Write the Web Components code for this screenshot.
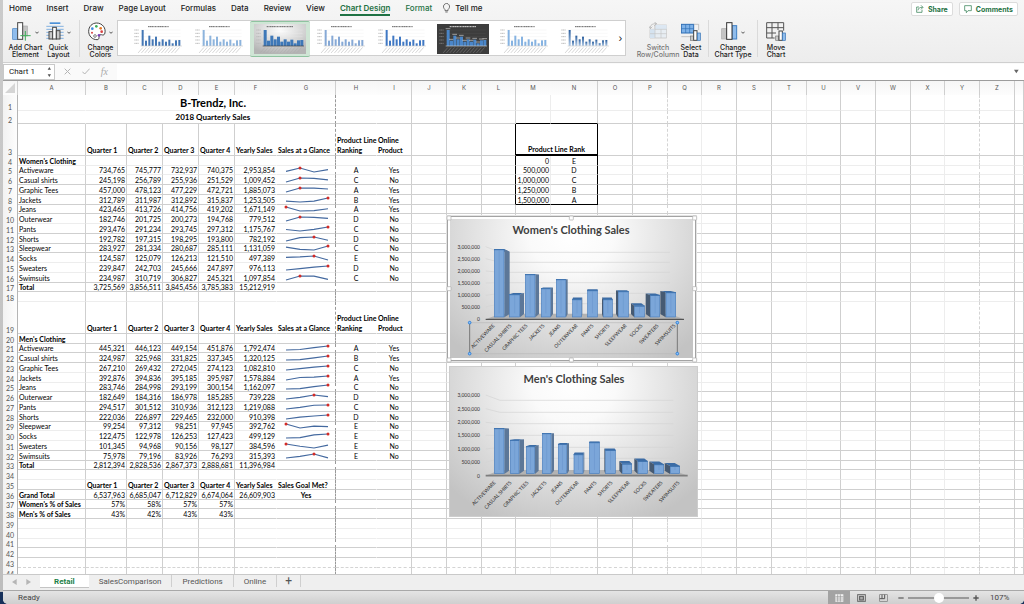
<!DOCTYPE html>
<html lang="en">
<head>
<meta charset="utf-8">
<title>B-Trendz - Retail</title>
<style>
    html, body {
        margin: 0;
        height: 100%;
        overflow: hidden;
    }
    body {
        font-family: Inter, "Liberation Sans", sans-serif;
        font-size: 8px;
        color: #222;
        background: linear-gradient(#cbcbcb 0, #bdbdbd 98%, #16305a 98%);
        --green: #1f7244;
        --line: #cfcfcf;
        --faint: #ededed;
    }
</style>
</head>
<body>
<app-window></app-window>

<script>
(function() {
    const define = (name, html, setup) => {
        const $template = document.createElement('template');
        $template.innerHTML = html;
        customElements.define(name, class extends HTMLElement {
            constructor() {
                super();
                this.attachShadow({ mode: 'open' });
            }
            connectedCallback() {
                if (this.shadowRoot.childNodes.length) {
                    return;
                }
                this.shadowRoot.appendChild($template.content.cloneNode(true));
                if (setup) {
                    setup(this, this.shadowRoot);
                }
            }
        });
    };

    const resetButton = `
        button {
            font: inherit;
            color: inherit;
            margin: 0;
            padding: 0;
            border: 0;
            background: none;
            cursor: pointer;
        }
    `;

    /* ---------- icons, drawn on a 3x grid ---------- */
    const icons = {
        addChart: [20, 19, `
            <rect x="2" y="20" width="15" height="32" fill="#8fbcec" stroke="#3f7fc4" stroke-width="2"/>
            <rect x="32" y="12" width="14" height="30" fill="#c4c4c4" stroke="#aaa" stroke-width="2"/>
            <rect x="17" y="2" width="15" height="50" fill="#fff" stroke="#444" stroke-width="3"/>
            <path d="M25 41H56M40 27V56" stroke="#3fae5a" stroke-width="3" fill="none"/>`],
        quickLayout: [18, 19, `
            <rect x="11" y="1" width="32" height="5" fill="#4b91d8"/>
            <path d="M1 13H53M1 22H53M1 31H53M1 40H53M1 49H53" stroke="#4b91d8" stroke-width="2"/>
            <rect x="9" y="29" width="11" height="22" fill="#c9c9c9" stroke="#444" stroke-width="3"/>
            <rect x="20" y="16" width="11" height="35" fill="#fff" stroke="#444" stroke-width="3"/>
            <rect x="31" y="26" width="11" height="25" fill="#c9c9c9" stroke="#444" stroke-width="3"/>`],
        palette: [18, 19, `
            <path d="M26 3C12 3 2 14 2 28s11 25 25 25c9 0 4-9 8-14 4-4 10 4 15-3C56 18 42 3 26 3Z" fill="#fff" stroke="#444" stroke-width="3"/>
            <circle cx="13" cy="20" r="4" fill="#3c8be0"/><circle cx="25" cy="13" r="4" fill="#3fae5a"/>
            <circle cx="38" cy="19" r="4" fill="#e87722"/><circle cx="12" cy="32" r="3" fill="#d84141"/>
            <circle cx="21" cy="42" r="4" fill="none" stroke="#444" stroke-width="2"/>
            <circle cx="33" cy="40" r="4" fill="#7b3fb5"/><circle cx="41" cy="29" r="4" fill="#d84141"/>`],
        switchRow: [18, 19, `
            <path d="M18 9H53V48H3V22H18Z" fill="#e2ecf5" stroke="#b9b9b9" stroke-width="3"/>
            <rect x="18" y="9" width="35" height="13" fill="#cfe1f3"/><rect x="3" y="22" width="15" height="26" fill="#c3daf0"/>
            <path d="M3 35H53M18 22H53M18 9V48M36 22V48" stroke="#a9a9a9" stroke-width="2" fill="none"/>
            <path d="M4 19C3 9 10 5 22 5M16 0l7 5-7 6M0 13l4 7 6-6" stroke="#777" stroke-width="2" fill="none"/>`],
        selectData: [20, 19, `
            <rect x="1" y="7" width="37" height="26" fill="#7fb2e8" stroke="#2f6fb5" stroke-width="3"/>
            <path d="M1 20H38M14 7V33M26 7V33" stroke="#2f6fb5" stroke-width="2"/>
            <path d="M1 44H34M38 7H53V24" stroke="#aaa" stroke-width="2" fill="none"/>
            <rect x="28" y="42" width="9" height="13" fill="#c9c9c9" stroke="#777" stroke-width="2"/>
            <rect x="38" y="26" width="10" height="29" fill="#fff" stroke="#444" stroke-width="3"/>
            <rect x="49" y="33" width="9" height="22" fill="#8fbcec" stroke="#2f6fb5" stroke-width="2"/>`],
        chartType: [17, 19, `
            <rect x="2" y="20" width="15" height="31" fill="#c4c4c4" stroke="#aaa" stroke-width="2"/>
            <rect x="33" y="11" width="14" height="40" fill="#8fbcec" stroke="#3f7fc4" stroke-width="3"/>
            <rect x="17" y="2" width="16" height="50" fill="#fff" stroke="#333" stroke-width="3"/>`],
        moveChart: [20, 19, `
            <path d="M26 48H2V2H53V26M2 17H53M2 33H30M18 2V48M36 2V24" fill="none" stroke="#555" stroke-width="3"/>
            <rect x="29" y="42" width="9" height="13" fill="#c9c9c9" stroke="#777" stroke-width="2"/>
            <rect x="39" y="27" width="10" height="28" fill="#fff" stroke="#444" stroke-width="3"/>
            <rect x="49" y="33" width="9" height="22" fill="#8fbcec" stroke="#2f6fb5" stroke-width="2"/>`],
        chevron: [4, 3, `<path d="M1 2l5 5 5-5" fill="none" stroke="#333" stroke-width="2.5"/>`],
        bulb: [7, 10, `
            <path d="M6 20C1 15 0 10 3 5.500 7 0 15 0 18 5.500 21 10 20 15 15 20v3H6Z" fill="none" stroke="#333" stroke-width="2"/>
            <path d="M7 27h7" stroke="#333" stroke-width="2"/>`],
        share: [8, 8, `
            <path d="M9 6H2V22H18V14" fill="none" stroke="#1f7244" stroke-width="2"/>
            <path d="M6 16C7 9 11 7 20 7M15 1l6 6-6 6" fill="none" stroke="#1f7244" stroke-width="2"/>`],
        comment: [8, 8, `<path d="M2 2H22V17H12l-5 6v-6H2Z" fill="none" stroke="#1f7244" stroke-width="2"/>`],
        cancel: [7, 7, `<path d="M2 2L19 19M19 2L2 19" stroke="#b4b4b4" stroke-width="3"/>`],
        accept: [8, 7, `<path d="M1 11l7 7L23 2" fill="none" stroke="#b4b4b4" stroke-width="3"/>`],
        normalView: [9, 8, `
            <rect x="1" y="1" width="24" height="22" fill="#fff"/>
            <path d="M1 7H25M1 12H25M1 18H25M8 1V23M16 1V23" stroke="#8f8f8f" stroke-width="2"/>`],
        pageView: [9, 8, `
            <rect x="2" y="2" width="23" height="20" fill="none" stroke="#666" stroke-width="3"/>
            <rect x="8" y="7" width="11" height="11" fill="#aaa" stroke="#555" stroke-width="3"/>`],
        breakView: [9, 8, `
            <rect x="2" y="2" width="23" height="20" fill="none" stroke="#777" stroke-width="2"/>
            <path d="M2 14H17V2M9 2V14" fill="none" stroke="#555" stroke-width="3"/>`]
    };

    const icon = (name) => {
        const [w, h, body] = icons[name];
        return `<svg width="${w}" height="${h}" viewBox="0 0 ${w * 3} ${h * 3}" aria-hidden="true">${body}</svg>`;
    };

    /* ---------- menu ---------- */
    define('menu-tab', `
    <style>
        ${resetButton}
        :host { display: block; }
        button {
            height: 16px;
            line-height: 16px;
            font-weight: 500;
            white-space: nowrap;
            box-sizing: border-box;
        }
        :host([tone]) button { color: var(--green); }
        :host([current]) button {
            font-weight: 600;
            border-bottom: 2px solid var(--green);
        }
    </style>
    <button type="button"><slot></slot></button>
    `);

    define('menu-bar', `
    <style>
        ${resetButton}
        :host {
            display: flex;
            align-items: flex-start;
            justify-content: space-between;
            height: 18px;
            padding: 0 6px;
        }
        nav { display: flex; gap: 15px; }
        .tell, .actions, .actions button { display: flex; align-items: center; }
        .tell { gap: 5px; height: 16px; margin-left: -4px; font-weight: 500; }
        .actions { gap: 6px; padding-top: 2px; }
        .actions button {
            gap: 4px;
            height: 14px;
            padding: 0 4px;
            color: var(--green);
            font-size: 7px;
            font-weight: 700;
            background: #fff;
            border: 1px solid #dcdcdc;
            border-radius: 2px;
        }
    </style>
    <nav>
        <menu-tab>Home</menu-tab>
        <menu-tab>Insert</menu-tab>
        <menu-tab>Draw</menu-tab>
        <menu-tab>Page Layout</menu-tab>
        <menu-tab>Formulas</menu-tab>
        <menu-tab>Data</menu-tab>
        <menu-tab>Review</menu-tab>
        <menu-tab>View</menu-tab>
        <menu-tab tone current>Chart Design</menu-tab>
        <menu-tab tone>Format</menu-tab>
        <button class="tell" type="button">${icon('bulb')}Tell me</button>
    </nav>
    <div class="actions">
        <button type="button">${icon('share')}Share</button>
        <button type="button">${icon('comment')}Comments</button>
    </div>
    `);

    /* ---------- ribbon ---------- */
    define('ribbon-button', `
    <style>
        ${resetButton}
        :host { display: flex; justify-content: center; }
        :host([muted]) { opacity: .6; }
        button {
            display: flex;
            flex-direction: column;
            align-items: center;
            font-size: 7px;
            line-height: 7px;
            font-weight: 500;
            white-space: pre;
        }
        .icon {
            display: flex;
            align-items: center;
            gap: 3px;
            height: 24px;
        }
        .more { display: none; }
        :host([menu]) .more { display: flex; }
    </style>
    <button type="button">
        <span class="icon"><span id="icon"></span><span class="more">${icon('chevron')}</span></span>
        <slot></slot>
    </button>
    `, ($el, root) => {
        root.getElementById('icon').innerHTML = icon($el.getAttribute('icon'));
    });

    const thumbValues = [48, 16, 31, 20, 28, 13, 20, 13, 19, 8, 17, 18];

    define('chart-thumb', `
    <style>
        ${resetButton}
        :host { display: block; }
        button {
            display: block;
            padding: 2px 4px;
            border: 1px solid transparent;
            border-width: 1px 0;
            border-radius: 2px;
        }
        svg { display: block; }
        :host([selected]) button {
            background: #cfe5d5;
            border-color: #8fc3a0;
        }
    </style>
    <button type="button"></button>
    `, ($el, root) => {
        const look = $el.getAttribute('look');
        const dark = look === 'dark';
        const gray = look === 'gray';
        const fills = {
            plain: '#4377b5', light: '#8db4dd', gray: '#3e78b8', pale: '#86a9d6',
            wide: '#3f78c4', dark: '#4a86c9', sky: '#86b3e2', fade: 'url(#bar)'
        };
        let parts = '';
        for (let y = 18; y < 66; y += 10) {
            parts += `<path d="M26 ${y}H146" stroke="${dark ? '#555' : '#e9e9e9'}"/>`;
            parts += `<path d="M7 ${y}H20" stroke="${dark ? '#777' : '#bbb'}" stroke-width="3" stroke-dasharray="4 1"/>`;
        }
        thumbValues.forEach((v, i) => {
            const x = 29 + i * 10;
            const w = gray || dark ? 9 : 6;
            parts += `<rect x="${x}" y="${66 - v}" width="${w}" height="${v}" fill="${fills[look]}"/>`;
            parts += `<path d="M${x - 10} 86l14-16" stroke="${dark ? '#888' : '#aaa'}" stroke-width="2" stroke-dasharray="3 1"/>`;
            if (dark) {
                parts += `<path d="M${x - 3} ${62 - v}h14" stroke="#ccc" stroke-width="2"/>`;
            }
        });
        root.querySelector('button').setAttribute('aria-label', 'Chart style ' + look);
        root.querySelector('button').innerHTML = `
            <svg width="52" height="30" viewBox="0 0 156 90">
                <defs>
                    <linearGradient id="bar" x2="0" y2="1"><stop stop-color="#2c5f9e"/><stop offset="1" stop-color="#b5cde8"/></linearGradient>
                    <radialGradient id="bg" cx=".5" cy=".2" r=".8"><stop stop-color="#fff"/><stop offset="1" stop-color="#b4b4b4"/></radialGradient>
                </defs>
                <rect width="156" height="90" fill="${dark ? '#3d3d3d' : gray ? 'url(#bg)' : '#fff'}"/>
                <path d="M${gray || dark ? 38 : 48} 8h${gray || dark ? 80 : 62}" stroke="${dark ? '#ddd' : '#666'}" stroke-width="3" stroke-dasharray="5 1 3 1"/>
                ${parts}
                <path d="M26 66H150" stroke="${gray ? '#444' : '#ccc'}" stroke-width="2"/>
            </svg>`;
    });

    define('ribbon-bar', `
    <style>
        ${resetButton}
        :host {
            display: flex;
            align-items: flex-start;
            height: 42px;
            padding: 2px 0 0 6px;
            border-bottom: 1px solid #cfcfcf;
        }
        .group { display: flex; }
        .group > * { width: 33px; }
        hr {
            width: 1px;
            height: 37px;
            margin: 0 4px;
            border: 0;
            background: #dadada;
        }
        .gallery {
            display: flex;
            flex: 0 1 509px;
            box-sizing: border-box;
            height: 36px;
            padding-left: 10px;
            background: #fff;
            border: 1px solid #cfcfcf;
        }
        .gallery chart-thumb { flex: 0 0 60px; margin-right: 1px; }
        .gallery button { flex: 1; font-size: 10px; }
        .wide { margin-left: 12px; }
        .wide > * { width: 40px; }
        .wide > :last-child { width: 26px; }
        .type { width: 40px; }
        .move { width: 28px; }
    </style>
    <div class="group">
        <ribbon-button icon="addChart" menu>Add Chart
Element</ribbon-button>
        <ribbon-button icon="quickLayout" menu>Quick
Layout</ribbon-button>
    </div>
    <hr>
    <div class="group"><ribbon-button icon="palette" menu>Change
Colors</ribbon-button></div>
    <div class="gallery">
        <chart-thumb look="plain"></chart-thumb>
        <chart-thumb look="light"></chart-thumb>
        <chart-thumb look="gray" selected></chart-thumb>
        <chart-thumb look="pale"></chart-thumb>
        <chart-thumb look="wide"></chart-thumb>
        <chart-thumb look="dark"></chart-thumb>
        <chart-thumb look="sky"></chart-thumb>
        <chart-thumb look="fade"></chart-thumb>
        <button type="button" aria-label="More chart styles">›</button>
    </div>
    <div class="group wide">
        <ribbon-button icon="switchRow" muted>Switch
Row/Column</ribbon-button>
        <ribbon-button icon="selectData">Select
Data</ribbon-button>
    </div>
    <hr>
    <ribbon-button class="type" icon="chartType" menu>Change
Chart Type</ribbon-button>
    <hr>
    <ribbon-button class="move" icon="moveChart">Move
Chart</ribbon-button>
    `);

    /* ---------- formula bar ---------- */
    define('formula-bar', `
    <style>
        ${resetButton}
        :host {
            display: flex;
            align-items: center;
            height: 17px;
            background: #fafafa;
            border-bottom: 1px solid #9c9c9c;
            font-family: Roboto, sans-serif;
        }
        input {
            font: inherit;
            color: #222;
            border: 0;
            padding: 0;
            outline: 0;
            background: none;
            min-width: 0;
        }
        .name {
            display: flex;
            align-items: center;
            box-sizing: border-box;
            width: 52px;
            height: 16px;
            padding: 0 2px 0 5px;
            background: #fff;
            border: 1px solid #c9c9c9;
        }
        .name input { flex: 1; }
        .tools {
            display: flex;
            align-items: center;
            justify-content: space-between;
            width: 44px;
            padding: 0 9px;
        }
        .fx {
            color: #aaa;
            font: italic 10px/12px "Liberation Serif", serif;
        }
        .formula {
            flex: 1;
            height: 16px;
            background: #fff;
        }
        .expand { width: 10px; background: #fff; height: 16px; }
        svg { display: block; }
    </style>
    <label class="name">
        <input aria-label="Name box" value="Chart 1">
        <svg width="5" height="12" viewBox="0 0 15 36"><path d="M2 11L7 3l5 8ZM2 25l5 8 5-8Z" fill="#555"/></svg>
    </label>
    <div class="tools">
        <button type="button" aria-label="Cancel">${icon('cancel')}</button>
        <button type="button" aria-label="Enter">${icon('accept')}</button>
        <button type="button" class="fx">fx</button>
    </div>
    <input class="formula" aria-label="Formula">
    <button class="expand" type="button" aria-label="Expand formula bar">
        <svg width="5" height="5" viewBox="0 0 15 15"><path d="M0 2H14L7 13Z" fill="#666"/></svg>
    </button>
    `);

    /* ---------- sheet data ---------- */
    const women = [
        ['Activeware', 734765, 745777, 732937, 740375, 'A', 'Yes'],
        ['Casual shirts', 245198, 256789, 255936, 251529, 'C', 'No'],
        ['Graphic Tees', 457000, 478123, 477229, 472721, 'A', 'Yes'],
        ['Jackets', 312789, 311987, 312892, 315837, 'B', 'Yes'],
        ['Jeans', 423465, 413726, 414756, 419202, 'A', 'Yes'],
        ['Outerwear', 182746, 201725, 200273, 194768, 'D', 'No'],
        ['Pants', 293476, 291234, 293745, 297312, 'C', 'No'],
        ['Shorts', 192782, 197315, 198295, 193800, 'D', 'No'],
        ['Sleepwear', 283927, 281334, 280687, 285111, 'C', 'No'],
        ['Socks', 124587, 125079, 126213, 121510, 'E', 'No'],
        ['Sweaters', 239847, 242703, 245666, 247897, 'D', 'No'],
        ['Swimsuits', 234987, 310719, 306827, 245321, 'C', 'No']
    ];
    const men = [
        ['Activeware', 445321, 446123, 449154, 451876, 'A', 'Yes'],
        ['Casual shirts', 324987, 325968, 331825, 337345, 'B', 'Yes'],
        ['Graphic Tees', 267210, 269432, 272045, 274123, 'C', 'No'],
        ['Jackets', 392876, 394836, 395185, 395987, 'A', 'Yes'],
        ['Jeans', 283746, 284998, 293199, 300154, 'C', 'No'],
        ['Outerwear', 182649, 184316, 186978, 185285, 'D', 'No'],
        ['Pants', 294517, 301512, 310936, 312123, 'C', 'No'],
        ['Shorts', 222036, 226897, 229465, 232000, 'D', 'No'],
        ['Sleepwear', 99254, 97312, 98251, 97945, 'E', 'No'],
        ['Socks', 122475, 122978, 126253, 127423, 'E', 'No'],
        ['Sweaters', 101345, 94968, 90156, 98127, 'E', 'No'],
        ['Swimsuits', 75978, 79196, 83926, 76293, 'E', 'No']
    ];

    const cells = {};
    const put = (ref, text, cls = '', span = 1) => {
        cells[ref] = { text, cls, span };
    };
    const num = (n) => n.toLocaleString('en-US');

    const sparkline = (values) => {
        const min = Math.min(...values);
        const max = Math.max(...values);
        const points = values.map((v, i) => [3 + i * 14, 6 - (v - min) / (max - min) * 4]);
        const [cx, cy] = points[values.indexOf(max)];
        return `<svg width="50" height="8" viewBox="0 0 50 8">
            <polyline points="${points.map((p) => p.join()).join(' ')}" fill="none" stroke="#44699f" stroke-width="1.2"/>
            <circle cx="${cx}" cy="${cy}" r="1.500" fill="#d32b26"/></svg>`;
    };

    const putHeads = (row, last) => {
        ['B', 'C', 'D', 'E'].forEach((c, i) => put(c + row, 'Quarter ' + (i + 1), 'b'));
        put('F' + row, 'Yearly Sales', 'b');
        put('G' + row, last, 'b');
    };
    const putNumbers = (row, values) => {
        values.forEach((v, i) => put('BCDEF'[i] + row, num(v), 'n'));
    };
    const putBlock = (row, title, items) => {
        putHeads(row, 'Sales at a Glance');
        put('H' + row, 'Product Line<br>Ranking', 'b');
        put('I' + row, 'Online<br>Product', 'b');
        put('A' + (row + 1), title, 'b');
        items.forEach((item, i) => {
            const r = row + 2 + i;
            const q = item.slice(1, 5);
            put('A' + r, item[0]);
            putNumbers(r, [...q, q.reduce((a, b) => a + b)]);
            put('G' + r, sparkline(q), 'c');
            put('H' + r, item[5], 'c');
            put('I' + r, item[6], 'c');
        });
    };

    put('A1', '', 'open');
    put('B1', 'B-Trendz, Inc.', 'title', 6);
    put('A2', '', 'open');
    put('B2', '2018 Quarterly Sales', 'subtitle', 6);
    putBlock(3, "Women's Clothing", women);
    put('A17', 'Total', 'b');
    putNumbers(17, [3725569, 3856511, 3845456, 3785383, 15212919]);
    putBlock(19, "Men's Clothing", men);
    put('A33', 'Total', 'b');
    putNumbers(33, [2812394, 2828536, 2867373, 2888681, 11396984]);
    putHeads(35, 'Sales Goal Met?');
    put('A36', 'Grand Total', 'b');
    putNumbers(36, [6537963, 6685047, 6712829, 6674064, 26609903]);
    put('G36', 'Yes', 'c b');
    put('A37', "Women's % of Sales", 'b');
    put('A38', "Men's % of Sales", 'b');
    ['57%', '58%', '57%', '57%'].forEach((v, i) => put('BCDE'[i] + 37, v, 'n'));
    ['43%', '42%', '43%', '43%'].forEach((v, i) => put('BCDE'[i] + 38, v, 'n'));

    // rank lookup table, boxed in M3:N8
    put('M2', '', 'under');
    put('N2', '', 'under');
    put('M3', 'Product Line Rank', 'b c under2 right', 2);
    [['0', 'E'], ['500,000', 'D'], ['1,000,000', 'C'], ['1,250,000', 'B'], ['1,500,000', 'A']].forEach(([m, n], i) => {
        const end = i === 4 ? ' under' : '';
        put('M' + (4 + i), m, 'n' + end);
        put('N' + (4 + i), n, 'c right' + end);
    });
    for (let r = 3; r <= 8; r++) {
        put('L' + r, '', 'right');
    }

    const widths = {
        A: 68, B: 41, C: 36, D: 36, E: 36, F: 42, G: 59, H: 41, I: 35, J: 35, K: 35, L: 34, M: 35,
        N: 47, O: 35, P: 35, Q: 34, R: 35, S: 35, T: 35, U: 34, V: 35, W: 35, X: 34, Y: 35, Z: 35
    };
    const columns = Object.keys(widths);
    const noLine = ['F', 'H'];
    const faintCols = ['M', 'Q', 'T', 'X'];
    const breakCols = ['P', 'Y'];
    const faintRows = [1, 4, 5, 10, 14, 15, 18, 23, 24, 29, 30, 34, 39, 40];

    define('sheet-grid', `
    <style>
        :host {
            display: block;
            position: relative;
            overflow: hidden;
            background: #fff;
            font-family: Lato, "Liberation Sans", sans-serif;
            font-size: 7px;
            color: #000;
        }
        table {
            width: 100%;
            table-layout: fixed;
            border-collapse: separate;
            border-spacing: 0;
            line-height: 8px;
        }
        .head { width: 15px; }
        tr { height: 10px; }
        tbody tr:nth-child(4n+1) { height: 9px; }
        tbody tr:nth-child(1) { height: 16px; }
        tbody tr:nth-child(2) { height: 13px; }
        tbody tr.tall { height: 32px; }
        .tall td { line-height: 10px; }
        thead tr { height: 14px; }
        th, td {
            box-sizing: border-box;
            padding: 0 1px;
            white-space: nowrap;
            vertical-align: bottom;
            border-right: 1px solid var(--line);
            border-bottom: 1px solid var(--line);
            text-align: left;
        }
        th {
            font-weight: 400;
            text-align: center;
            color: #555;
            background: #fafafa;
            border-bottom: 0;
            padding: 0;
        }
        thead th {
            vertical-align: middle;
            background: linear-gradient(#f6f6f6, #fdfdfd);
            font-family: Inter, sans-serif;
            font-size: 6px;
        }
        tbody th {
            font-size: 7px;
            border-right-color: #b5b5b5;
            background: linear-gradient(90deg, #f2f2f2, #fdfdfd);
        }
        thead svg { display: block; }
        .none, .open { border-right-color: transparent; }
        .soft { border-right-color: var(--faint); }
        .break { border-right: 1px dashed #d4d4d4; }
        .page { border-right: 1px dashed #999; }
        .faint td { border-bottom-color: var(--faint); }
        .pagerow td { border-bottom: 1px dashed #d4d4d4; }
        .b, .title, .subtitle { font-weight: 700; }
        .n { text-align: right; }
        .c { text-align: center; }
        .c svg { display: block; margin-left: 5px; }
        .title, .subtitle { padding-left: 6px; text-align: center; }
        .title { font-size: 11px; line-height: 12px; vertical-align: middle; }
        .subtitle { font-size: 8px; line-height: 11px; }
        tbody td.right { border-right: 1px solid #000; }
        tbody td.under { border-bottom: 1px solid #000; }
        tbody td.under2 { border-bottom: 2px solid #000; }
    </style>
    <table>
        <colgroup></colgroup>
        <thead><tr></tr></thead>
        <tbody></tbody>
    </table>
    <slot></slot>
    `, ($el, root) => {
        const lineClass = (col) => {
            if (col === 'G') return 'page';
            if (noLine.includes(col)) return 'none';
            if (breakCols.includes(col)) return 'break';
            return faintCols.includes(col) ? 'soft' : '';
        };

        root.querySelector('colgroup').innerHTML = '<col class="head">' +
            columns.map((c) => `<col style="width:${widths[c]}px">`).join('') + '<col>';
        root.querySelector('thead tr').innerHTML =
            '<th><svg width="14" height="14" viewBox="0 0 14 14"><path d="M12 2V12H2Z" fill="#d5d5d5"/></svg></th>' +
            columns.map((c) => `<th scope="col" class="${noLine.includes(c) || c === 'M' ? 'none' : ''}">${c}</th>`).join('') + '<th></th>';

        let rows = '';
        for (let r = 1; r <= 44; r++) {
            const cls = [
                r === 3 || r === 19 ? 'tall' : '',
                faintRows.includes(r) ? 'faint' : '',
                r === 43 ? 'pagerow' : ''
            ].join(' ');
            rows += `<tr class="${cls}"><th scope="row">${r}</th>`;
            for (let i = 0; i < columns.length; i++) {
                const cell = cells[columns[i] + r] || { text: '', cls: '', span: 1 };
                const last = columns[i + cell.span - 1];
                rows += `<td colspan="${cell.span}" class="${lineClass(last)} ${cell.cls}">${cell.text}</td>`;
                i += cell.span - 1;
            }
            rows += '<td></td></tr>';
        }
        root.querySelector('tbody').innerHTML = rows;
    });

    /* ---------- charts ---------- */
    const categories = women.map((item) => item[0].toUpperCase());
    const axisLabels = ['3,000,000', '2,500,000', '2,000,000', '1,500,000', '1,000,000', '500,000', '0'];

    // bars: front x, front top, front width, side depth (negative = side on the left); art is on a 3x grid
    const charts = {
        women: {
            title: "Women's Clothing Sales",
            left: 21, top: 30, titleX: 124, titleY: 18,
            base: 334, floor: [137, 180, 690, 732], axisY: 340, back: 323,
            labelY: [122, 158, 195, 231, 268, 303, 340],
            gridY: [139, 169, 199, 230, 262, 293],
            catX: [166, 216, 264, 316, 364, 413, 463, 511, 560, 609, 658, 708], catY: 360,
            axis: '#3b3b3b', axisWidth: 3,
            bars: [[162, 130, 31, 16], [208, 265, 32, 12], [255, 205, 31, 11], [303, 247, 29, 7], [348, 220, 30, 5], [397, 280, 28, 2],
                [442, 253, 31, 0], [489, 280, 29, -3], [534, 256, 32, -6], [583, 299, 31, -10], [631, 267, 29, -14], [677, 259, 31, -16]]
        },
        men: {
            title: "Men's Clothing Sales",
            left: 27, top: 18, titleX: 125, titleY: 17,
            base: 342, floor: [137, 180, 700, 743], axisY: 347, back: 330,
            labelY: [105, 146, 187, 226, 267, 307, 348],
            gridY: [121, 157, 191, 226, 262, 295],
            catX: [168, 216, 268, 320, 370, 418, 470, 519, 570, 620, 670, 720], catY: 368,
            axis: '#7d7d7d', axisWidth: 5,
            bars: [[162, 205, 31, 14], [210, 240, 28, 14], [258, 259, 27, 11], [306, 220, 28, 8], [354, 252, 27, 6], [401, 283, 29, 3],
                [448, 247, 31, 0], [496, 270, 31, -3], [546, 311, 30, -8], [593, 303, 30, -10], [642, 313, 30, -14], [690, 318, 30, -16]]
        }
    };

    define('sheet-chart', `
    <style>
        :host {
            display: block;
            position: absolute;
            width: 249px;
            height: 151px;
            box-sizing: border-box;
            border: 1px solid #cdcdcd;
            background: radial-gradient(ellipse 170px 150px at 50% 12%, #fff 0, #fafafa 25%, #c3c3c3 100%);
        }
        :host([selected]) {
            height: 145px;
            border: 1px solid #a3a3a3;
            outline: 1px solid #e3e3e3;
            box-shadow: inset 0 0 0 2px #fff;
        }
        svg {
            position: absolute;
            top: -1px;
            left: -1px;
            overflow: visible;
        }
        .title { font-size: 11px; font-weight: 700; fill: #3f3f3f; text-anchor: middle; }
        .label { font-size: 5px; fill: #333; text-anchor: end; }
    </style>
    `, ($el, root) => {
        const c = charts[$el.getAttribute('data')];
        const selected = $el.hasAttribute('selected');
        const height = selected ? 145 : 151;
        const backOf = (y) => y + (214 - y) * .083;
        const [f0, f1, f2, f3] = c.floor;
        let art = '';
        c.gridY.forEach((y, i) => {
            art += `<path d="M${f0} ${c.labelY[i]}L${f1} ${y}H${f2}" fill="none" stroke="#d3d3d3" stroke-width="2"/>`;
        });
        art += `<path d="M${f0} ${c.axisY}L${f1} ${c.back}H${f2}L${f3} ${c.axisY}Z" fill="#b3b3b3"/>`;
        art += `<path d="M${f0} ${c.axisY}H${f3}" stroke="${c.axis}" stroke-width="${c.axisWidth}"/>`;
        c.bars.forEach(([x, y, w, side]) => {
            const edge = side < 0 ? x : x + w;
            const back = backOf(y);
            art += `<path d="M${x} ${y}h${w}L${x + w + side} ${back}H${x + side}Z" fill="#3c6ca5"/>`;
            art += `<path d="M${edge} ${y}L${edge + side} ${back}V${c.base - 10}L${edge} ${c.base}Z" fill="${side < 0 ? '#465a72' : '#5c7798'}"/>`;
            art += `<rect x="${x + 1}" y="${y + 1}" width="${w - 2}" height="${c.base - y - 2}" fill="#7ba6d9" stroke="#4a7fbe" stroke-width="2"/>`;
            art += `<path d="M${x + w / 2} ${y + 3}V${c.base - 12}" stroke="#6d99cf" stroke-width="2"/>`;
            art += `<path d="M${x} ${y + 1}h${w}" stroke="#3b70ad" stroke-width="3"/>`;
        });
        if (selected) {
            art += '<path d="M89 350H712M89 443H712" stroke="#b9b9b9" stroke-width="2"/><path d="M89 350V443M712 350V443" stroke="#777" stroke-width="3"/>';
            [[89, 350], [712, 350], [89, 443], [712, 443]].forEach(([x, y]) => {
                art += `<circle cx="${x}" cy="${y}" r="4" fill="#8cc4ff" stroke="#2f7fd6" stroke-width="3"/>`;
            });
            [[27, 36], [394, 36], [764, 36], [27, 248], [764, 248], [27, 462], [394, 462], [764, 462]].forEach(([x, y]) => {
                art += `<rect x="${x - 6}" y="${y - 6}" width="12" height="12" rx="2" fill="#fff" stroke="#a9a9a9" stroke-width="2"/>`;
            });
        }
        let texts = `<text class="title" x="${c.titleX}" y="${c.titleY}">${c.title}</text>`;
        axisLabels.forEach((text, i) => {
            texts += `<text class="label" x="${Math.round((121 - c.left) / 3)}" y="${Math.round((c.labelY[i] - c.top) / 3) + 2}">${text}</text>`;
        });
        categories.forEach((text, i) => {
            const x = Math.round((c.catX[i] - c.left) / 3);
            const y = Math.round((c.catY - c.top) / 3);
            texts += `<text class="label" transform="translate(${x} ${y}) rotate(-46)">${text}</text>`;
        });
        root.appendChild(document.createElement('div')).innerHTML = `
            <svg width="249" height="${height}" viewBox="0 0 249 ${height}" role="img" aria-label="${c.title}">
                <g transform="scale(.33333) translate(${-c.left} ${-c.top})">${art}</g>${texts}
            </svg>`;
    });

    /* ---------- sheet tabs ---------- */
    define('sheet-tabs', `
    <style>
        ${resetButton}
        :host {
            display: flex;
            height: 15px;
            padding-left: 4px;
            background: #efefef;
            border-top: 1px solid #c9c9c9;
            font-family: Roboto, sans-serif;
            color: #555;
        }
        .arrow { width: 14px; }
        .tab {
            height: 12px;
            padding: 0 10px;
            border-right: 1px solid #cfcfcf;
        }
        .first { margin-left: 5px; }
        .tab[aria-current] {
            height: 13px;
            padding: 0 14px;
            color: #1d8148;
            font-weight: 700;
            background: #fff;
            border-right: 0;
            border-bottom: 1px solid #c4c4c4;
        }
        .add { width: 24px; padding: 0; font-size: 12px; line-height: 12px; }
    </style>
    <button class="arrow" type="button" aria-label="Previous sheet"><svg width="5" height="6" viewBox="0 0 15 18"><path d="M14 0V18L0 9Z" fill="#b5b5b5"/></svg></button>
    <button class="arrow" type="button" aria-label="Next sheet"><svg width="5" height="6" viewBox="0 0 15 18"><path d="M1 0V18L15 9Z" fill="#b5b5b5"/></svg></button>
    <button class="tab first" type="button" aria-current="page">Retail</button>
    <button class="tab" type="button">SalesComparison</button>
    <button class="tab" type="button">Predictions</button>
    <button class="tab" type="button">Online</button>
    <button class="tab add" type="button" aria-label="New sheet">+</button>
    `);

    /* ---------- status bar ---------- */
    define('status-bar', `
    <style>
        ${resetButton}
        :host {
            display: flex;
            align-items: center;
            height: 13px;
            padding: 0 15px;
            border-top: 1px solid #a8a8a8;
            background: linear-gradient(#e4e4e4, #cfcfcf);
            font-family: Roboto, sans-serif;
            color: #444;
        }
        .ready { flex: 1; }
        .view {
            display: flex;
            align-items: center;
            justify-content: center;
            width: 22px;
            height: 13px;
        }
        .view[aria-pressed] { background: #a3a3a3; }
        .zoom { display: flex; align-items: center; gap: 4px; margin-left: 4px; }
        .zoom svg { display: block; }
        input {
            appearance: none;
            width: 61px;
            height: 10px;
            margin: 0;
            background: linear-gradient(#999, #999) center / 100% 2px no-repeat;
        }
        input::-webkit-slider-thumb {
            appearance: none;
            width: 10px;
            height: 10px;
            border-radius: 50%;
            background: #fff;
        }
        output { width: 19px; margin-left: 11px; text-align: right; }
    </style>
    <span class="ready">Ready</span>
    <button class="view" type="button" aria-pressed="true" aria-label="Normal">${icon('normalView')}</button>
    <button class="view" type="button" aria-label="Page layout">${icon('pageView')}</button>
    <button class="view" type="button" aria-label="Page break preview">${icon('breakView')}</button>
    <div class="zoom">
        <button type="button" aria-label="Zoom out"><svg width="6" height="6" viewBox="0 0 18 18"><path d="M1 9H17" stroke="#666" stroke-width="4"/></svg></button>
        <input type="range" aria-label="Zoom" min="10" max="204" value="107">
        <button type="button" aria-label="Zoom in"><svg width="6" height="6" viewBox="0 0 18 18"><path d="M1 9H17M9 1V17" stroke="#555" stroke-width="4"/></svg></button>
    </div>
    <output>107%</output>
    `);

    define('app-window', `
    <style>
        :host {
            display: flex;
            flex-direction: column;
            height: 100vh;
            margin-left: 3px;
            overflow: hidden;
            border-radius: 0 0 5px 5px;
            background: linear-gradient(#f6f6f6, #ededed 62px);
        }
        sheet-grid { flex: 1; min-height: 0; }
        .women { left: 444px; top: 135px; }
        .men { left: 446px; top: 285px; }
    </style>
    <menu-bar></menu-bar>
    <ribbon-bar></ribbon-bar>
    <formula-bar></formula-bar>
    <sheet-grid>
        <sheet-chart class="women" data="women" selected></sheet-chart>
        <sheet-chart class="men" data="men"></sheet-chart>
    </sheet-grid>
    <sheet-tabs></sheet-tabs>
    <status-bar></status-bar>
    `);
})();
</script>
</body>
</html>
